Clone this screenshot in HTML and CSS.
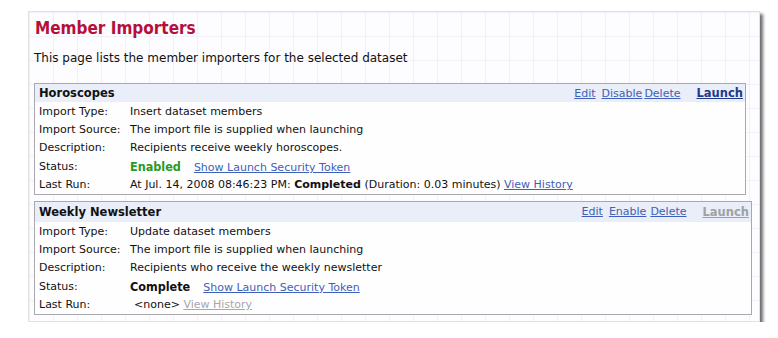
FILE: index.html
```html
<!DOCTYPE html>
<html>
<head>
<meta charset="utf-8">
<link rel="stylesheet" href="styles.css">
</head>
<body>
<div class="panel">
  <h1 class="title">Member Importers</h1>
  <p class="intro">This page lists the member importers for the selected dataset</p>

  <div class="box box-first">
    <div class="box-head">
      <span class="box-name">Horoscopes</span>
      <span class="actions">
        <a class="lnk">Edit</a>
        <a class="lnk">Disable</a><a class="lnk tight">Delete</a>
        <a class="launch">Launch</a>
      </span>
    </div>
    <div class="rows">
      <div class="lbl">Import Type:</div><div class="val">Insert dataset members</div>
      <div class="lbl">Import Source:</div><div class="val">The import file is supplied when launching</div>
      <div class="lbl">Description:</div><div class="val">Recipients receive weekly horoscopes.</div>
      <div class="lbl">Status:</div><div class="val"><span class="st st-on">Enabled</span><a class="lnk">Show Launch Security Token</a></div>
      <div class="lbl">Last Run:</div><div class="val">At Jul. 14, 2008 08:46:23 PM: <b>Completed</b> (Duration: 0.03 minutes) <a class="lnk">View History</a></div>
    </div>
  </div>

  <div class="box box-second">
    <div class="box-head">
      <span class="box-name">Weekly Newsletter</span>
      <span class="actions">
        <a class="lnk">Edit</a>
        <a class="lnk">Enable</a><a class="lnk tight">Delete</a>
        <a class="launch off">Launch</a>
      </span>
    </div>
    <div class="rows">
      <div class="lbl">Import Type:</div><div class="val">Update dataset members</div>
      <div class="lbl">Import Source:</div><div class="val">The import file is supplied when launching</div>
      <div class="lbl">Description:</div><div class="val">Recipients who receive the weekly newsletter</div>
      <div class="lbl">Status:</div><div class="val"><span class="st">Complete</span><a class="lnk">Show Launch Security Token</a></div>
      <div class="lbl">Last Run:</div><div class="val none">&lt;none&gt; <a class="lnk dim">View History</a></div>
    </div>
  </div>
</div>
</body>
</html>
```

FILE: styles.css
```css
html, body {
  margin: 0;
  padding: 0;
  background: #ffffff;
  font-family: "DejaVu Sans", Verdana, sans-serif;
  color: #111;
}

.panel {
  box-sizing: border-box;
  margin: 11px 0 0 28px;
  width: 732px;
  height: 311px;
  padding: 0 0 0 5px;
  border: 1px solid #e2e2e6;
  background-color: #fdfcff;
  background-image:
    linear-gradient(to right, rgba(220, 220, 235, 0.35) 1px, transparent 1px),
    linear-gradient(to bottom, rgba(220, 220, 235, 0.35) 1px, transparent 1px);
  background-size: 24px 24px;
  box-shadow: 3px 3px 3px rgba(60, 60, 60, 0.75);
}

.title {
  margin: 0;
  padding: 5px 0 0 1px;
  font-family: "DejaVu Sans Condensed", "DejaVu Sans", sans-serif;
  font-stretch: condensed;
  font-size: 17px;
  font-weight: bold;
  line-height: 22px;
  color: #b5103c;
}

.intro {
  margin: 0;
  padding: 11px 0 0 0;
  font-size: 12px;
  line-height: 16px;
  color: #111;
}

.box {
  box-sizing: border-box;
  border: 1px solid #a9a9ad;
  background: #fefeff;
  font-size: 11px;
}

.box-first {
  margin-top: 17px;
  width: 712px;
}

.box-second {
  margin-top: 6px;
  width: 718px;
}

.box-head {
  display: flex;
  justify-content: space-between;
  align-items: center;
  height: 18px;
  padding: 0 2px 0 4px;
  background: #e9eef8;
}

.box-second .box-head {
  height: 20px;
}

.box-name {
  font-size: 11.5px;
  font-weight: bold;
  color: #111;
}

.actions {
  display: flex;
  align-items: center;
}

.lnk {
  color: #3f60b8;
  text-decoration: underline;
  margin-right: 6px;
}

.actions .lnk.tight {
  margin-left: -4px;
}

.box-second .actions .lnk.tight {
  margin-left: -2px;
}

.launch {
  margin-left: 10px;
  font-weight: bold;
  font-size: 11.5px;
  color: #1e3a8e;
  text-decoration: underline;
}

.launch.off {
  color: #a0a0a6;
}

.rows {
  display: grid;
  grid-template-columns: 91px 1fr;
  grid-auto-rows: 18.4px;
  align-items: center;
  padding-left: 4px;
}

.val .lnk {
  margin-right: 0;
}

.st {
  font-family: "DejaVu Sans Condensed", "DejaVu Sans", sans-serif;
  font-stretch: condensed;
  font-size: 12.5px;
  font-weight: bold;
  margin-right: 13px;
}

.st-on {
  color: #279a25;
}

.none {
  padding-left: 4px;
}

.lnk.dim {
  color: #a6a6ac;
}
```
